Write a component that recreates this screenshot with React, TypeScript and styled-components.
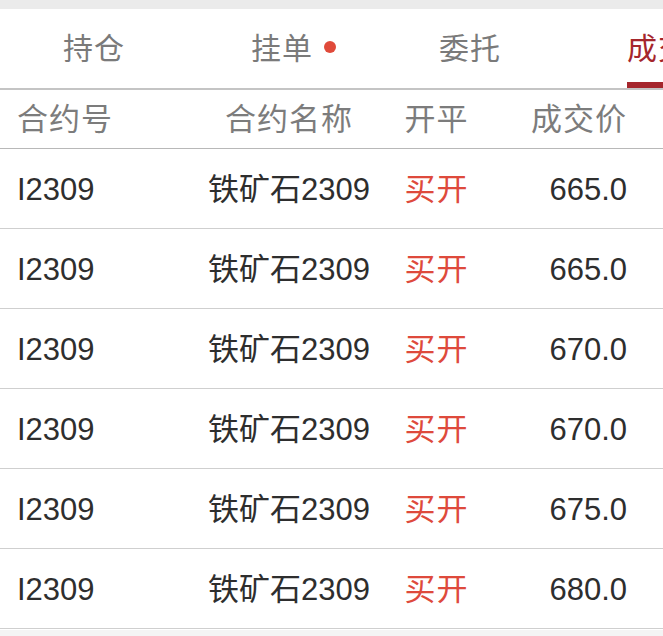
import React from "react";
import styled, { createGlobalStyle } from "styled-components";

type Trade = { code: string; name: string; side: string; price: string };

const trades: Trade[] = [
  { code: "I2309", name: "铁矿石2309", side: "买开", price: "665.0" },
  { code: "I2309", name: "铁矿石2309", side: "买开", price: "665.0" },
  { code: "I2309", name: "铁矿石2309", side: "买开", price: "670.0" },
  { code: "I2309", name: "铁矿石2309", side: "买开", price: "670.0" },
  { code: "I2309", name: "铁矿石2309", side: "买开", price: "675.0" },
  { code: "I2309", name: "铁矿石2309", side: "买开", price: "680.0" },
];

const tabs = [
  { label: "持仓", dot: false },
  { label: "挂单", dot: true },
  { label: "委托", dot: false },
  { label: "成交", dot: false },
];

const App: React.FC = () => {
  return (
    <Page>
      <GlobalStyle />
      <TopStrip />
      <TabBar>
        {tabs.map((t, i) => (
          <Tab key={t.label}>
            <TabLabel $active={i === 3}>
              {t.label}
              {t.dot && <Dot />}
            </TabLabel>
          </Tab>
        ))}
      </TabBar>
      <HeaderRow>
        <HeadCell $align="left">合约号</HeadCell>
        <HeadCell $align="center">合约名称</HeadCell>
        <HeadCell $align="center">开平</HeadCell>
        <HeadCell $align="right">成交价</HeadCell>
      </HeaderRow>
      {trades.map((t, i) => (
        <Row key={i}>
          <Cell $align="left">{t.code}</Cell>
          <Cell $align="center">{t.name}</Cell>
          <SideCell $align="center">{t.side}</SideCell>
          <Cell $align="right">{t.price}</Cell>
        </Row>
      ))}
      <Footer />
    </Page>
  );
};

const GlobalStyle = createGlobalStyle`
  html, body {
    margin: 0;
    padding: 0;
    background: #fff;
  }
  body {
    font-family: "Liberation Sans", "Noto Sans CJK SC", sans-serif;
  }
`;

const Page = styled.div`
  width: 663px;
  height: 636px;
  overflow: hidden;
  background: #fff;
`;

const TopStrip = styled.div`
  height: 9px;
  background: #ebebeb;
`;

const TabBar = styled.div`
  display: flex;
  height: 79px;
  border-bottom: 2px solid #c4c4c4;
  width: 752px;
`;

const Tab = styled.div`
  width: 188px;
  display: flex;
  justify-content: center;
  align-items: stretch;
`;

const TabLabel = styled.div<{ $active: boolean }>`
  position: relative;
  display: flex;
  align-items: center;
  font-size: 30px;
  letter-spacing: 1px;
  color: ${(p) => (p.$active ? "#a5262c" : "#7a7a7a")};
  border-bottom: 6px solid ${(p) => (p.$active ? "#a5262c" : "transparent")};
`;

// unread badge next to the tab title
const Dot = styled.span`
  position: absolute;
  left: 73px;
  top: 32px;
  width: 12px;
  height: 12px;
  border-radius: 50%;
  background: #e04a3a;
`;

// cells share one baseline so CJK and digits sit on the same line
const grid = `
  display: grid;
  grid-template-columns: 183px 178px 117px 1fr;
  padding-left: 17px;
  padding-right: 36px;
  align-items: baseline;
`;

const HeaderRow = styled.div`
  ${grid}
  height: 59px;
  box-sizing: border-box;
  padding-top: 4px;
  border-bottom: 1px solid #b8b8b8;
`;

const Row = styled.div`
  ${grid}
  height: 80px;
  box-sizing: border-box;
  padding-top: 15px;
  border-bottom: 1px solid #cfcfcf;
`;

const HeadCell = styled.div<{ $align: "left" | "center" | "right" }>`
  text-align: ${(p) => p.$align};
  font-size: 31px;
  color: #7c7c7c;
  letter-spacing: 1px;
  white-space: nowrap;
`;

const Cell = styled.div<{ $align: "left" | "center" | "right" }>`
  text-align: ${(p) => p.$align};
  font-size: 31px;
  color: #2e2e2e;
  white-space: nowrap;
`;

const SideCell = styled(Cell)`
  color: #de4a3c;
  letter-spacing: 1px;
`;

const Footer = styled.div`
  height: 8px;
  background: #f4f4f4;
  margin-top: 1px;
`;

export default App;
